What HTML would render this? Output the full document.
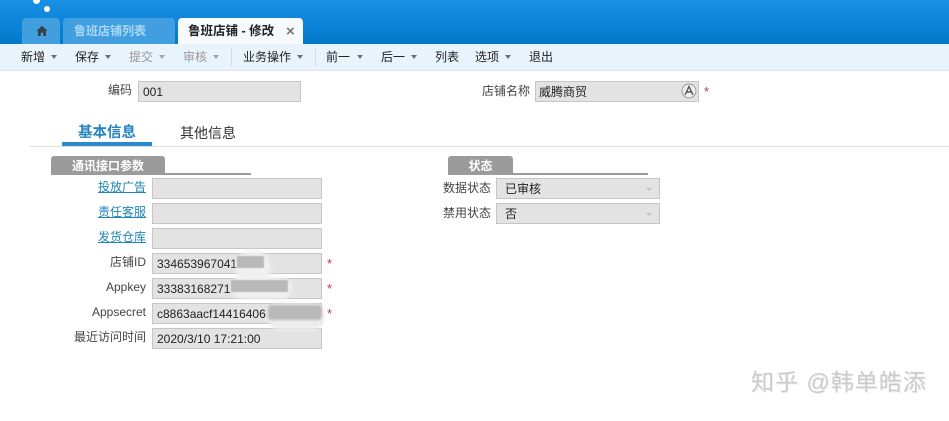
<!DOCTYPE html>
<html lang="zh-CN">
<head>
<meta charset="utf-8">
<style>
html,body{margin:0;padding:0;background:#fff}
body{width:949px;height:421px;position:relative;overflow:hidden;font-family:"Liberation Sans","Noto Sans CJK SC",sans-serif;font-size:12px;color:#333}
div,span,a{position:absolute;white-space:nowrap}
#top{left:0;top:0;width:949px;height:44px;background:linear-gradient(#1a90e4,#0279cb)}
.dot{background:#fff;border-radius:50%}
.tab{top:18px;height:26px;border-radius:4px 4px 0 0;background:#419fe0;line-height:27px;text-align:center;font-size:12px}
#bar{left:0;top:44px;width:949px;height:26px;background:#e9f3fb;border-bottom:1px solid #dbe6ee}
.m{top:49px;font-size:12px;line-height:17px;color:#222}
.m.d{color:#999}
.ar{top:55px;width:0;height:0;border-left:3.5px solid transparent;border-right:3.5px solid transparent;border-top:4px solid #66707a}
.ar.d{border-top-color:#9aa}
.sep{top:48px;width:1px;height:18px;background:#d3dce3}
.l{text-align:right;line-height:16px;color:#444;font-size:12px}
.i{background:#e3e3e3;border:1px solid #c6c6c6;box-sizing:border-box;height:21px;line-height:21px;padding-left:4px;font-size:12px;color:#222}
.lnk{color:#1f86b6;text-decoration:underline;line-height:16px;font-size:12px;text-align:right}
.req{color:#c9354d;font-size:13px;line-height:12px}
.sec{background:#9b9b9b;color:#fff;font-weight:bold;height:19px;line-height:20px;text-align:center;border-radius:3px 3px 0 0;font-size:12px}
.ul{height:2px;background:#9b9b9b}
.blur{background:#b8b8b8;filter:blur(.5px)}
.wh{background:#f1f1f1;filter:blur(2px)}
.dd{width:0;height:0;border-left:3px solid transparent;border-right:3px solid transparent;border-top:3px solid #c4c4c4}
</style>
</head>
<body>
<div id="top"></div>
<div class="dot" style="left:33px;top:-3px;width:7px;height:7px"></div>
<div class="dot" style="left:44px;top:6px;width:6px;height:6px"></div>

<div class="tab" style="left:22px;width:38px"></div>
<svg style="position:absolute;left:36px;top:25px" width="12" height="12" viewBox="0 0 12 12"><path d="M6 .8 L.4 6 H2 V11 H4.8 V7.6 H7.2 V11 H10 V6 H11.6 Z" fill="#37424a"/></svg>
<div class="tab" style="left:63px;width:112px;color:#a9d8f5;font-weight:bold;text-align:left;padding-left:11px;box-sizing:border-box">鲁班店铺列表</div>
<div class="tab" style="left:178px;width:125px;background:#f6fafd;color:#222;font-weight:bold;text-align:left;padding-left:10px;box-sizing:border-box;font-size:12.5px">鲁班店铺 - 修改</div>
<div style="left:286px;top:24px;font-size:15px;line-height:15px;color:#777;font-weight:bold">×</div>

<div id="bar"></div>
<div class="m" style="left:21px">新增</div><div class="ar" style="left:51px"></div>
<div class="m" style="left:75px">保存</div><div class="ar" style="left:105px"></div>
<div class="m d" style="left:129px">提交</div><div class="ar d" style="left:159px"></div>
<div class="m d" style="left:183px">审核</div><div class="ar d" style="left:213px"></div>
<div class="sep" style="left:231px"></div>
<div class="m" style="left:243px">业务操作</div><div class="ar" style="left:297px"></div>
<div class="sep" style="left:315px"></div>
<div class="m" style="left:326px">前一</div><div class="ar" style="left:357px"></div>
<div class="m" style="left:381px">后一</div><div class="ar" style="left:411px"></div>
<div class="m" style="left:435px">列表</div>
<div class="m" style="left:475px">选项</div><div class="ar" style="left:505px"></div>
<div class="m" style="left:529px">退出</div>

<div class="l" style="left:100px;top:82px;width:32px">编码</div>
<div class="i" style="left:138px;top:81px;width:163px">001</div>
<div class="l" style="left:470px;top:83px;width:60px">店铺名称</div>
<div class="i" style="left:535px;top:81px;width:164px;padding-left:3px">威腾商贸</div>
<svg style="position:absolute;left:681px;top:83px" width="16" height="16" viewBox="0 0 16 16"><circle cx="8" cy="8" r="7" fill="#efefef" stroke="#999"/><path d="M4 12 L8 3.5 L12 12 M5.6 9 H10.4" fill="none" stroke="#555" stroke-width="1.4"/></svg>
<div class="req" style="left:704px;top:86px">*</div>

<div style="left:78px;top:123px;font-size:14.5px;line-height:20px;color:#2383bd;font-weight:bold">基本信息</div>
<div style="left:180px;top:123px;font-size:14px;line-height:20px;color:#333">其他信息</div>
<div style="left:30px;top:146px;width:919px;height:1px;background:#dedede"></div>
<div style="left:62px;top:142px;width:90px;height:4px;background:#2b8acb"></div>

<div class="sec" style="left:51px;top:156px;width:114px">通讯接口参数</div>
<div class="ul" style="left:165px;top:173px;width:86px"></div>
<div class="lnk" style="left:90px;top:179px;width:56px">投放广告</div>
<div class="i" style="left:152px;top:178px;width:170px"></div>
<div class="lnk" style="left:90px;top:204px;width:56px">责任客服</div>
<div class="i" style="left:152px;top:203px;width:170px"></div>
<div class="lnk" style="left:90px;top:229px;width:56px">发货仓库</div>
<div class="i" style="left:152px;top:228px;width:170px"></div>

<div class="l" style="left:90px;top:254px;width:56px">店铺ID</div>
<div class="i" style="left:152px;top:253px;width:170px">334653967041</div>
<div class="l" style="left:90px;top:279px;width:56px">Appkey</div>
<div class="i" style="left:152px;top:278px;width:170px">33383168271</div>
<div class="l" style="left:70px;top:304px;width:76px">Appsecret</div>
<div class="i" style="left:152px;top:303px;width:170px">c8863aacf14416406</div>
<div class="l" style="left:60px;top:329px;width:86px">最近访问时间</div>
<div class="i" style="left:152px;top:328px;width:170px">2020/3/10 17:21:00</div>

<div class="wh" style="left:236px;top:251px;width:34px;height:44px;border-radius:14px"></div>
<div class="wh" style="left:232px;top:277px;width:60px;height:22px;border-radius:10px"></div>
<div class="blur" style="left:237px;top:256px;width:27px;height:12px"></div>
<div class="blur" style="left:231px;top:280px;width:57px;height:12px"></div>
<div class="wh" style="left:268px;top:303px;width:56px;height:27px;border-radius:12px;background:#ededed"></div>
<div class="blur" style="left:268px;top:305px;width:54px;height:15px;border-radius:4px;filter:blur(1px)"></div>

<div class="req" style="left:327px;top:258px">*</div>
<div class="req" style="left:327px;top:283px">*</div>
<div class="req" style="left:327px;top:308px">*</div>

<div class="sec" style="left:448px;top:156px;width:65px">状态</div>
<div class="ul" style="left:513px;top:173px;width:135px"></div>
<div class="l" style="left:435px;top:180px;width:56px">数据状态</div>
<div class="i" style="left:496px;top:178px;width:164px;padding-left:8px">已审核</div>
<div class="dd" style="left:646px;top:188px"></div>
<div class="l" style="left:435px;top:205px;width:56px">禁用状态</div>
<div class="i" style="left:496px;top:203px;width:164px;padding-left:8px">否</div>
<div class="dd" style="left:646px;top:213px"></div>

<div style="left:751px;top:368px;font-size:23px;line-height:28px;color:#cbcbcb;text-shadow:1px 1px 0 #eee;letter-spacing:1px">知乎 @韩单皓添</div>
</body>
</html>
